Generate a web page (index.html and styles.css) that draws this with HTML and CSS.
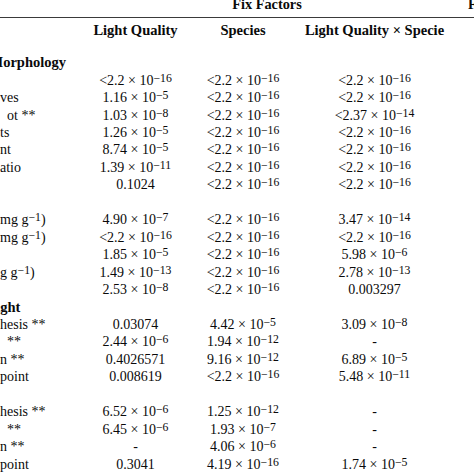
FILE: index.html
```html
<!DOCTYPE html>
<html>
<head>
<meta charset="utf-8">
<link rel="stylesheet" href="styles.css">
</head>
<body>
<div class="table">
  <div class="row group">
    <div class="grp span3">Fix Factors</div>
    <div class="grp next">F</div>
  </div>
  <div class="row head">
    <div></div>
    <div class="c">Light Quality</div>
    <div class="c">Species</div>
    <div class="c">Light Quality × Specie</div>
    <div></div>
  </div>

  <div class="row"><div class="lbl sec crop-m">Morphology</div></div>
  <div class="row"><div class="lbl"></div><div class="c">&lt;2.2 × 10<span class="e">−16</span></div><div class="c">&lt;2.2 × 10<span class="e">−16</span></div><div class="c">&lt;2.2 × 10<span class="e">−16</span></div></div>
  <div class="row"><div class="lbl">ves</div><div class="c">1.16 × 10<span class="e">−5</span></div><div class="c">&lt;2.2 × 10<span class="e">−16</span></div><div class="c">&lt;2.2 × 10<span class="e">−16</span></div></div>
  <div class="row"><div class="lbl ind">ot **</div><div class="c">1.03 × 10<span class="e">−8</span></div><div class="c">&lt;2.2 × 10<span class="e">−16</span></div><div class="c">&lt;2.37 × 10<span class="e">−14</span></div></div>
  <div class="row"><div class="lbl">ts</div><div class="c">1.26 × 10<span class="e">−5</span></div><div class="c">&lt;2.2 × 10<span class="e">−16</span></div><div class="c">&lt;2.2 × 10<span class="e">−16</span></div></div>
  <div class="row"><div class="lbl">nt</div><div class="c">8.74 × 10<span class="e">−5</span></div><div class="c">&lt;2.2 × 10<span class="e">−16</span></div><div class="c">&lt;2.2 × 10<span class="e">−16</span></div></div>
  <div class="row"><div class="lbl">atio</div><div class="c">1.39 × 10<span class="e">−11</span></div><div class="c">&lt;2.2 × 10<span class="e">−16</span></div><div class="c">&lt;2.2 × 10<span class="e">−16</span></div></div>
  <div class="row"><div class="lbl"></div><div class="c">0.1024</div><div class="c">&lt;2.2 × 10<span class="e">−16</span></div><div class="c">&lt;2.2 × 10<span class="e">−16</span></div></div>
  <div class="row"></div>
  <div class="row"><div class="lbl">mg g<span class="e">−1</span>)</div><div class="c">4.90 × 10<span class="e">−7</span></div><div class="c">&lt;2.2 × 10<span class="e">−16</span></div><div class="c">3.47 × 10<span class="e">−14</span></div></div>
  <div class="row"><div class="lbl">mg g<span class="e">−1</span>)</div><div class="c">&lt;2.2 × 10<span class="e">−16</span></div><div class="c">&lt;2.2 × 10<span class="e">−16</span></div><div class="c">&lt;2.2 × 10<span class="e">−16</span></div></div>
  <div class="row"><div class="lbl"></div><div class="c">1.85 × 10<span class="e">−5</span></div><div class="c">&lt;2.2 × 10<span class="e">−16</span></div><div class="c">5.98 × 10<span class="e">−6</span></div></div>
  <div class="row"><div class="lbl">g g<span class="e">−1</span>)</div><div class="c">1.49 × 10<span class="e">−13</span></div><div class="c">&lt;2.2 × 10<span class="e">−16</span></div><div class="c">2.78 × 10<span class="e">−13</span></div></div>
  <div class="row"><div class="lbl"></div><div class="c">2.53 × 10<span class="e">−8</span></div><div class="c">&lt;2.2 × 10<span class="e">−16</span></div><div class="c">0.003297</div></div>

  <div class="row"><div class="lbl sec crop-l">Light</div></div>
  <div class="row"><div class="lbl">hesis **</div><div class="c">0.03074</div><div class="c">4.42 × 10<span class="e">−5</span></div><div class="c">3.09 × 10<span class="e">−8</span></div></div>
  <div class="row"><div class="lbl ind">**</div><div class="c">2.44 × 10<span class="e">−6</span></div><div class="c">1.94 × 10<span class="e">−12</span></div><div class="c">-</div></div>
  <div class="row"><div class="lbl">n **</div><div class="c">0.4026571</div><div class="c">9.16 × 10<span class="e">−12</span></div><div class="c">6.89 × 10<span class="e">−5</span></div></div>
  <div class="row"><div class="lbl">point</div><div class="c">0.008619</div><div class="c">&lt;2.2 × 10<span class="e">−16</span></div><div class="c">5.48 × 10<span class="e">−11</span></div></div>
  <div class="row"></div>
  <div class="row"><div class="lbl">hesis **</div><div class="c">6.52 × 10<span class="e">−6</span></div><div class="c">1.25 × 10<span class="e">−12</span></div><div class="c">-</div></div>
  <div class="row"><div class="lbl ind">**</div><div class="c">6.45 × 10<span class="e">−6</span></div><div class="c">1.93 × 10<span class="e">−7</span></div><div class="c">-</div></div>
  <div class="row"><div class="lbl">n **</div><div class="c">-</div><div class="c">4.06 × 10<span class="e">−6</span></div><div class="c">-</div></div>
  <div class="row"><div class="lbl">point</div><div class="c">0.3041</div><div class="c">4.19 × 10<span class="e">−16</span></div><div class="c">1.74 × 10<span class="e">−5</span></div></div>
</div>
</body>
</html>
```
FILE: styles.css
```css
html, body {
  margin: 0;
  padding: 0;
  background: #ffffff;
  overflow: hidden;
}
body {
  color: #0a0a0a;
  font-family: "Liberation Serif", "DejaVu Serif", serif;
  font-size: 14px;
}
.table {
  width: 474px;
}
.row {
  display: grid;
  grid-template-columns: 87px 97px 118px 145px 27px;
  height: 17.46px;
  line-height: 17.46px;
  white-space: nowrap;
}
.c {
  text-align: center;
}
.lbl {
  text-align: left;
}
.ind {
  padding-left: 7px;
}
.sec {
  font-weight: bold;
  font-size: 14.5px;
}
.crop-m {
  margin-left: -10.5px;
}
.crop-l {
  margin-left: -13.5px;
}
.e {
  font-size: 0.84em;
  vertical-align: 3px;
  line-height: 0;
}
.group {
  height: 17px;
  border-bottom: 1px solid #3a3a3a;
  font-weight: bold;
  font-size: 14.3px;
  line-height: 8px;
}
.span3 {
  grid-column: 2 / 5;
  text-align: center;
}
.next {
  grid-column: 5 / 6;
  padding-left: 21px;
}
.head {
  height: auto;
  padding: 2.2px 0 14px;
  font-weight: bold;
  font-size: 14.5px;
  line-height: 20px;
}
```
